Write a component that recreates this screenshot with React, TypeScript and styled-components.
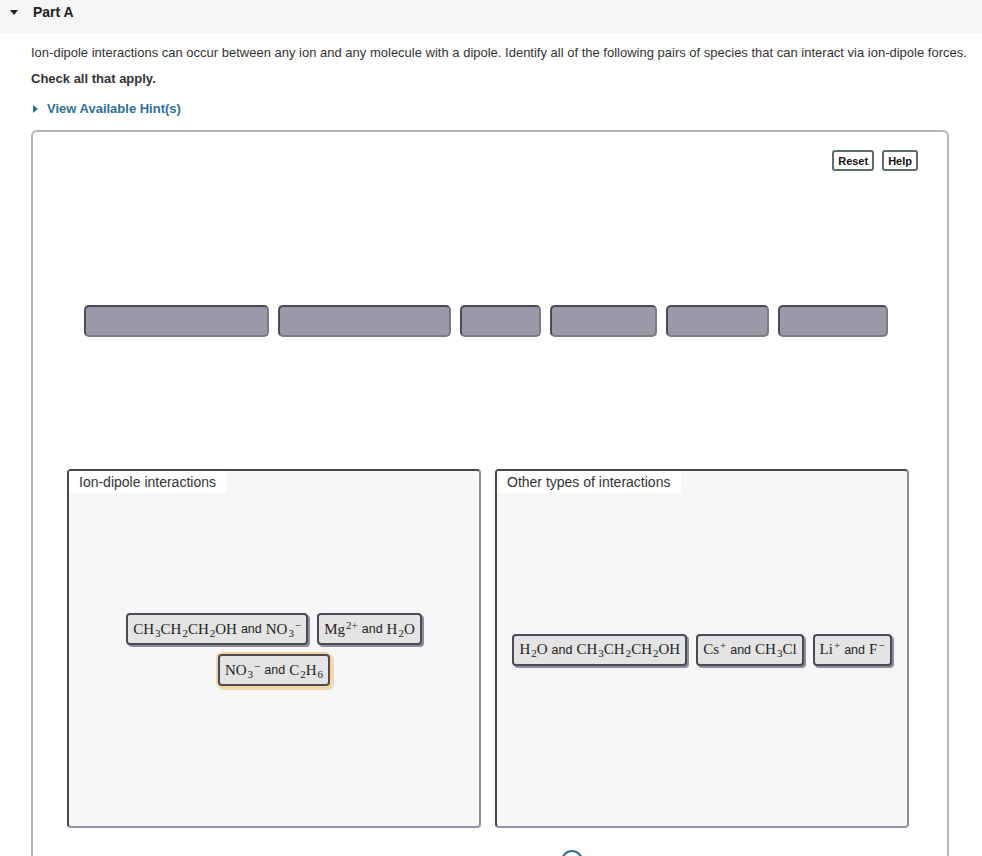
import React from "react";
import styled, { createGlobalStyle } from "styled-components";

const Global = createGlobalStyle`
  html, body { margin: 0; padding: 0; background: #ffffff; }
  body { font-family: "Liberation Sans", Arial, sans-serif; color: #222; }
`;

const Page = styled.div`
  width: 982px;
  height: 856px;
  overflow: hidden;
`;

const HeaderBar = styled.div`
  height: 33px;
  background: #f6f6f6;
  display: flex;
  align-items: center;
  padding-left: 10px;
  gap: 15px;
  box-sizing: border-box;
  padding-bottom: 9px;
`;

const DownTri = styled.span`
  width: 0;
  height: 0;
  border-left: 4px solid transparent;
  border-right: 4px solid transparent;
  border-top: 5px solid #222;
`;

const PartTitle = styled.span`
  font-weight: bold;
  font-size: 14px;
  color: #222;
`;

const Body = styled.div`
  padding-left: 31px;
`;

const Prompt = styled.p`
  margin: 12px 0 0 0;
  font-size: 13px;
  line-height: 16px;
  color: #333;
  white-space: nowrap;
`;

const Strong = styled.p`
  margin: 10px 0 0 0;
  font-size: 13px;
  line-height: 16px;
  font-weight: bold;
  color: #333;
`;

const HintLink = styled.div`
  margin-top: 14px;
  display: flex;
  align-items: center;
  gap: 9px;
  padding-left: 2px;
  font-size: 13px;
  line-height: 16px;
  font-weight: bold;
  color: #2f6f93;
`;

const RightTri = styled.span`
  width: 0;
  height: 0;
  border-top: 4px solid transparent;
  border-bottom: 4px solid transparent;
  border-left: 5px solid #2f6f93;
`;

const Board = styled.div`
  margin-top: 13px;
  width: 918px;
  height: 760px;
  box-sizing: border-box;
  border: 2px solid #b4b4b4;
  border-radius: 6px;
  padding: 18px 29px 0 34px;
`;

const Toolbar = styled.div`
  display: flex;
  justify-content: flex-end;
  gap: 8px;
`;

const ToolButton = styled.button`
  height: 21px;
  padding: 0 4px;
  font-family: "Liberation Sans", Arial, sans-serif;
  font-size: 11px;
  font-weight: bold;
  color: #111;
  background: #ffffff;
  border: 2px solid #5f6b6b;
  border-radius: 3px;
`;

const SlotRow = styled.div`
  margin-top: 134px;
  padding-left: 17px;
  display: flex;
  gap: 9px;
`;

const Slot = styled.div<{ $w: number }>`
  width: ${(p) => p.$w}px;
  height: 32px;
  box-sizing: border-box;
  background: #9a99a8;
  border: 2px solid #4c4b55;
  border-right-color: #7a7a80;
  border-bottom-color: #7a7a80;
  border-radius: 5px;
`;

const BinRow = styled.div`
  margin-top: 132px;
  display: flex;
  gap: 14px;
`;

const Bin = styled.div`
  width: 414px;
  height: 359px;
  box-sizing: border-box;
  background: #f7f7f7;
  border: 2px solid #46454d;
  border-bottom-color: #9492a6;
  border-right-color: #8d8c9b;
  border-radius: 4px;
  display: flex;
  flex-direction: column;
`;

const BinLabel = styled.div`
  align-self: flex-start;
  background: #ffffff;
  height: 22px;
  line-height: 22px;
  padding: 0 11px 0 10px;
  font-size: 14px;
  color: #333;
`;

const TileArea = styled.div`
  flex: 1;
  display: flex;
  flex-wrap: wrap;
  justify-content: center;
  align-content: center;
  gap: 9px;
  padding: 0 4px 20px;
`;

const Tile = styled.div<{ $glow?: boolean }>`
  height: 32px;
  box-sizing: border-box;
  display: flex;
  align-items: center;
  padding: 0 5px;
  background: #e4e4e4;
  border: 2px solid #4c4b55;
  border-radius: 4px;
  box-shadow: ${(p) =>
    p.$glow ? "0 0 0 2px #f3d7a2, 2px 2px 0 2px #f0d9ae" : "2px 2px 0 0 #8e8d9c"};
  white-space: nowrap;
`;

const Chem = styled.span`
  font-family: "Liberation Serif", "Times New Roman", serif;
  font-size: 15px;
  color: #222;
`;

const And = styled.span`
  font-family: "Liberation Sans", Arial, sans-serif;
  font-size: 12.5px;
  color: #222;
  margin: 0 4px;
`;

const Sub = styled.sub`
  font-size: 11px;
  vertical-align: -3px;
  line-height: 0;
  margin-left: 1px;
`;

const Sup = styled.sup`
  font-size: 11px;
  vertical-align: 5px;
  line-height: 0;
  margin-left: 1px;
`;

const BottomRow = styled.div`
  margin-top: 22px;
  padding-left: 494px;
`;

const BlueDot = styled.div`
  width: 22px;
  height: 22px;
  border-radius: 50%;
  border: 2px solid #2f6f93;
  box-sizing: border-box;
`;

const slots = [185, 173, 81, 107, 103, 110];

export default function App() {
  return (
    <Page>
      <Global />
      <HeaderBar>
        <DownTri />
        <PartTitle>Part A</PartTitle>
      </HeaderBar>
      <Body>
        <Prompt>
          Ion-dipole interactions can occur between any ion and any molecule with a dipole. Identify all of the following pairs of species that can interact via ion-dipole forces.
        </Prompt>
        <Strong>Check all that apply.</Strong>
        <HintLink>
          <RightTri />
          View Available Hint(s)
        </HintLink>
        <Board>
          <Toolbar>
            <ToolButton>Reset</ToolButton>
            <ToolButton>Help</ToolButton>
          </Toolbar>
          <SlotRow>
            {slots.map((w, i) => (
              <Slot key={i} $w={w} />
            ))}
          </SlotRow>
          <BinRow>
            <Bin>
              <BinLabel>Ion-dipole interactions</BinLabel>
              <TileArea>
                <Tile>
                  <Chem>
                    CH<Sub>3</Sub>CH<Sub>2</Sub>CH<Sub>2</Sub>OH
                  </Chem>
                  <And>and</And>
                  <Chem>
                    NO<Sub>3</Sub>
                    <Sup>−</Sup>
                  </Chem>
                </Tile>
                <Tile>
                  <Chem>
                    Mg<Sup>2+</Sup>
                  </Chem>
                  <And>and</And>
                  <Chem>
                    H<Sub>2</Sub>O
                  </Chem>
                </Tile>
                <Tile $glow>
                  <Chem>
                    NO<Sub>3</Sub>
                    <Sup>−</Sup>
                  </Chem>
                  <And>and</And>
                  <Chem>
                    C<Sub>2</Sub>H<Sub>6</Sub>
                  </Chem>
                </Tile>
              </TileArea>
            </Bin>
            <Bin>
              <BinLabel>Other types of interactions</BinLabel>
              <TileArea>
                <Tile>
                  <Chem>
                    H<Sub>2</Sub>O
                  </Chem>
                  <And>and</And>
                  <Chem>
                    CH<Sub>3</Sub>CH<Sub>2</Sub>CH<Sub>2</Sub>OH
                  </Chem>
                </Tile>
                <Tile>
                  <Chem>
                    Cs<Sup>+</Sup>
                  </Chem>
                  <And>and</And>
                  <Chem>
                    CH<Sub>3</Sub>Cl
                  </Chem>
                </Tile>
                <Tile>
                  <Chem>
                    Li<Sup>+</Sup>
                  </Chem>
                  <And>and</And>
                  <Chem>
                    F<Sup>−</Sup>
                  </Chem>
                </Tile>
              </TileArea>
            </Bin>
          </BinRow>
          <BottomRow>
            <BlueDot />
          </BottomRow>
        </Board>
      </Body>
    </Page>
  );
}
